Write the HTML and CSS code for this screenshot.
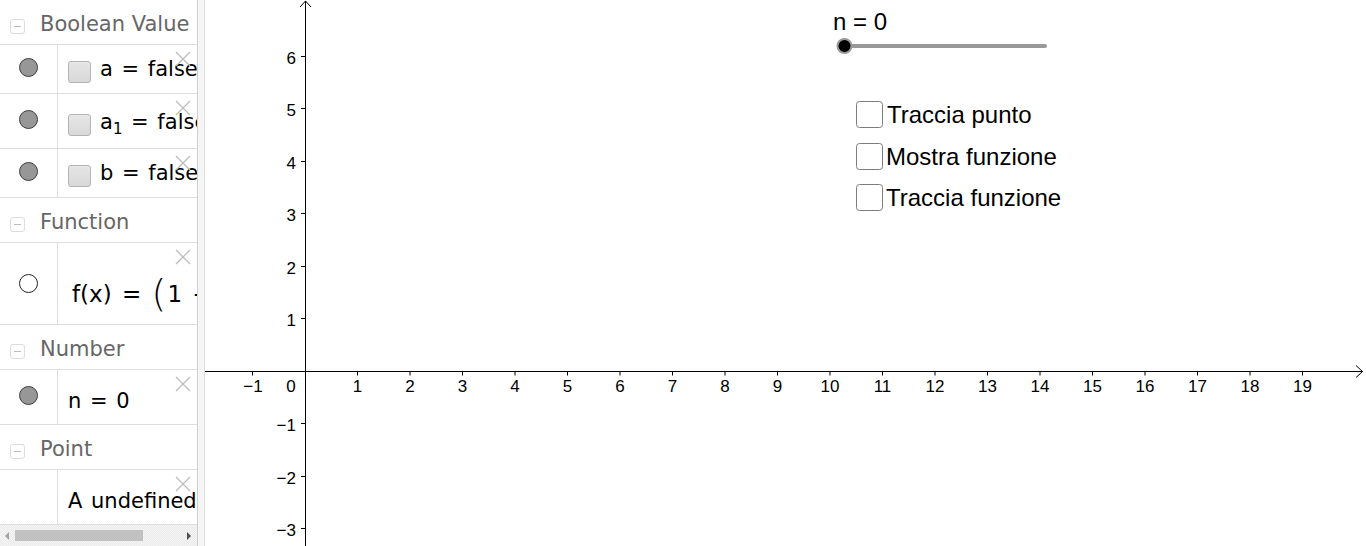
FILE: index.html
```html
<!DOCTYPE html>
<html>
<head>
<meta charset="utf-8">
<title>GeoGebra</title>
<link rel="stylesheet" href="styles.css">
</head>
<body>
<div class="app">
  <aside class="algebra">
    <div class="list">
      <div class="group-head"><span class="toggle"></span><span class="group-title">Boolean Value</span></div>
      <div class="item h49">
        <div class="marble-col"><span class="marble"></span></div>
        <div class="content"><span class="cb"></span><span class="math">a = false</span></div>
        <svg class="close" width="16" height="16" viewBox="0 0 16 16"><path d="M1 1L15 15M15 1L1 15"/></svg>
      </div>
      <div class="item h55">
        <div class="marble-col"><span class="marble"></span></div>
        <div class="content sub-row"><span class="cb"></span><span class="math">a<sub>1</sub> = false</span></div>
        <svg class="close" width="16" height="16" viewBox="0 0 16 16"><path d="M1 1L15 15M15 1L1 15"/></svg>
      </div>
      <div class="item h49">
        <div class="marble-col"><span class="marble"></span></div>
        <div class="content"><span class="cb"></span><span class="math">b = false</span></div>
        <svg class="close" width="16" height="16" viewBox="0 0 16 16"><path d="M1 1L15 15M15 1L1 15"/></svg>
      </div>
      <div class="group-head"><span class="toggle"></span><span class="group-title">Function</span></div>
      <div class="item h82">
        <div class="marble-col"><span class="marble hollow"></span></div>
        <div class="content fn"><span class="math">f(x) = <span class="paren">(</span>1 − </span></div>
        <svg class="close" width="16" height="16" viewBox="0 0 16 16"><path d="M1 1L15 15M15 1L1 15"/></svg>
      </div>
      <div class="group-head"><span class="toggle"></span><span class="group-title">Number</span></div>
      <div class="item h55">
        <div class="marble-col"><span class="marble"></span></div>
        <div class="content low"><span class="math">n = 0</span></div>
        <svg class="close" width="16" height="16" viewBox="0 0 16 16"><path d="M1 1L15 15M15 1L1 15"/></svg>
      </div>
      <div class="group-head"><span class="toggle"></span><span class="group-title">Point</span></div>
      <div class="item h55">
        <div class="marble-col"></div>
        <div class="content low"><span class="math">A undefined</span></div>
        <svg class="close" width="16" height="16" viewBox="0 0 16 16"><path d="M1 1L15 15M15 1L1 15"/></svg>
      </div>
    </div>
    <div class="hscroll">
      <span class="arr-left"></span>
      <span class="thumb"></span>
      <span class="arr-right"></span>
    </div>
  </aside>
  <div class="splitter"></div>
  <main class="graphics">
    <svg class="canvas" width="1161" height="546" viewBox="0 0 1161 546">
      <g class="axes">
        <line x1="100.5" y1="1" x2="100.5" y2="546"/>
        <line x1="0" y1="371.5" x2="1157.5" y2="371.5"/>
        <polyline points="95,7 100.5,1 106,7"/>
        <polyline points="1151,365.5 1157.5,371.5 1151,377.5"/>
        <path d="M47.5 371.5V375.5M152.5 371.5V375.5M205 371.5V375.5M257.5 371.5V375.5M310 371.5V375.5M362.5 371.5V375.5M415 371.5V375.5M467.5 371.5V375.5M520 371.5V375.5M572.5 371.5V375.5M625 371.5V375.5M677.5 371.5V375.5M730 371.5V375.5M782.5 371.5V375.5M835 371.5V375.5M887.5 371.5V375.5M940 371.5V375.5M992.5 371.5V375.5M1045 371.5V375.5M1097.5 371.5V375.5"/>
        <path d="M96 56.5H100.5M96 108.5H100.5M96 161.5H100.5M96 213.5H100.5M96 266.5H100.5M96 318.5H100.5M96 423.5H100.5M96 476.5H100.5M96 528.5H100.5"/>
      </g>
      <g class="xl">
        <text x="48" y="392">−1</text>
        <text x="86" y="392">0</text>
        <text x="152.5" y="392">1</text>
        <text x="205" y="392">2</text>
        <text x="257.5" y="392">3</text>
        <text x="310" y="392">4</text>
        <text x="362.5" y="392">5</text>
        <text x="415" y="392">6</text>
        <text x="467.5" y="392">7</text>
        <text x="520" y="392">8</text>
        <text x="572.5" y="392">9</text>
        <text x="625" y="392">10</text>
        <text x="677.5" y="392">11</text>
        <text x="730" y="392">12</text>
        <text x="782.5" y="392">13</text>
        <text x="835" y="392">14</text>
        <text x="887.5" y="392">15</text>
        <text x="940" y="392">16</text>
        <text x="992.5" y="392">17</text>
        <text x="1045" y="392">18</text>
        <text x="1097.5" y="392">19</text>
      </g>
      <g class="yl">
        <text x="91" y="64">6</text>
        <text x="91" y="116">5</text>
        <text x="91" y="169">4</text>
        <text x="91" y="221">3</text>
        <text x="91" y="274">2</text>
        <text x="91" y="326">1</text>
        <text x="91" y="431">−1</text>
        <text x="91" y="484">−2</text>
        <text x="91" y="536">−3</text>
      </g>
      <g class="slider">
        <text class="ctl" x="628" y="30">n = 0</text>
        <line class="track" x1="641" y1="46" x2="840" y2="46"/>
        <circle class="knob" cx="639.5" cy="46" r="7"/>
      </g>
      <g class="checks">
        <rect x="651.5" y="101.5" width="26" height="26" rx="3"/>
        <text class="ctl" x="682" y="123">Traccia punto</text>
        <rect x="651.5" y="143.5" width="26" height="26" rx="3"/>
        <text class="ctl" x="681" y="165">Mostra funzione</text>
        <rect x="651.5" y="184.5" width="26" height="26" rx="3"/>
        <text class="ctl" x="681" y="206">Traccia funzione</text>
      </g>
    </svg>
  </main>
</div>
</body>
</html>
```
FILE: styles.css
```css
* { box-sizing: border-box; }
html, body { margin: 0; padding: 0; height: 100%; overflow: hidden; background: #fff; }

.app { display: flex; width: 1366px; height: 546px; }

/* ---------- Algebra view ---------- */
.algebra {
  width: 197px;
  flex: none;
  display: flex;
  flex-direction: column;
  font-family: "DejaVu Sans", sans-serif;
  overflow: hidden;
}
.list { flex: 1; overflow: hidden; }

.group-head {
  height: 45px;
  border-bottom: 1px solid #dedede;
  display: flex;
  align-items: center;
  padding: 4px 0 0 10px;
  color: #666;
  font-size: 21px;
  white-space: nowrap;
}
.toggle {
  width: 15px;
  height: 15px;
  flex: none;
  border: 1px solid #dcdcdc;
  border-radius: 3px;
  position: relative;
  margin: 4px 15px 0 0;
}
.toggle::after {
  content: "";
  position: absolute;
  left: 3px;
  right: 3px;
  top: 6px;
  height: 1px;
  background: #bdbdbd;
}

.item {
  display: flex;
  border-bottom: 1px solid #dedede;
  position: relative;
}
.h49 { height: 49px; }
.h55 { height: 55px; }
.h82 { height: 82px; }

.marble-col {
  width: 58px;
  flex: none;
  border-right: 1px solid #dedede;
  display: flex;
  align-items: center;
  justify-content: center;
  padding-right: 1px;
}
.marble {
  width: 19px;
  height: 19px;
  border-radius: 50%;
  background: #979797;
  border: 1px solid #3c3c3c;
  margin-top: -3px;
}
.marble.hollow { background: #fff; border-color: #222; margin-top: -1px; }

.content {
  flex: 1;
  min-width: 0;
  display: flex;
  align-items: center;
  padding-left: 10px;
  white-space: nowrap;
  overflow: hidden;
  font-size: 21px;
  color: #000;
}
.content.fn {
  align-items: flex-start;
  padding: 38px 0 0 14px;
  font-size: 23px;
  line-height: 27px;
}
.content.fn .math { word-spacing: 3px; }
.content.low { padding-top: 8px; }
.content.sub-row { padding-top: 2px; }

.math { word-spacing: 2px; }
.math sub { font-size: 15px; vertical-align: -5px; line-height: 0; }
.paren {
  font-size: 38px;
  font-weight: 200;
  line-height: 0;
  position: relative;
  top: 4px;
  margin-right: 1px;
}

.cb {
  width: 23px;
  height: 22px;
  flex: none;
  margin: 5px 9px 0 0;
  border: 1px solid #b4b4b4;
  border-radius: 3px;
  background: linear-gradient(#e6e6e6, #d8d8d8);
}

.close {
  position: absolute;
  right: 6px;
  top: 6px;
}
.close path { stroke: #bdbdbd; stroke-width: 1.3; fill: none; }

.hscroll {
  height: 21px;
  flex: none;
  display: flex;
  align-items: center;
  padding: 0 5px;
  background: repeating-conic-gradient(#f6f6f6 0 25%, #e9e9e9 0 50%) 0 0 / 2px 2px;
}
.arr-left {
  width: 0; height: 0;
  border-top: 4px solid transparent;
  border-bottom: 4px solid transparent;
  border-right: 4px solid #a3a3a3;
  margin-right: 6px;
}
.thumb {
  width: 128px;
  height: 11px;
  background: #c1c1c1;
}
.arr-right {
  width: 0; height: 0;
  border-top: 4px solid transparent;
  border-bottom: 4px solid transparent;
  border-left: 4px solid #505050;
  margin-left: auto;
  margin-right: 1px;
}

.splitter {
  width: 8px;
  flex: none;
  background: #f5f5f5;
  border-left: 1px solid #cfcfcf;
  border-right: 1px solid #e2e2e2;
}

/* ---------- Graphics view ---------- */
.graphics { flex: 1; position: relative; overflow: hidden; }
.canvas { display: block; }
.axes line, .axes polyline, .axes path { stroke: #000; stroke-width: 1; fill: none; }
.xl text, .yl text {
  font-family: "Liberation Sans", Arial, sans-serif;
  font-size: 17px;
  fill: #000;
}
.xl text { text-anchor: middle; }
.yl text { text-anchor: end; }

.ctl {
  font-family: "Liberation Sans", Arial, sans-serif;
  font-size: 24px;
  fill: #000;
}
.track { stroke: #999; stroke-width: 4; stroke-linecap: round; }
.knob { fill: #000; stroke: #9a9a9a; stroke-width: 2; }
.checks rect { fill: #fff; stroke: #7d7d7d; stroke-width: 1; }
```
